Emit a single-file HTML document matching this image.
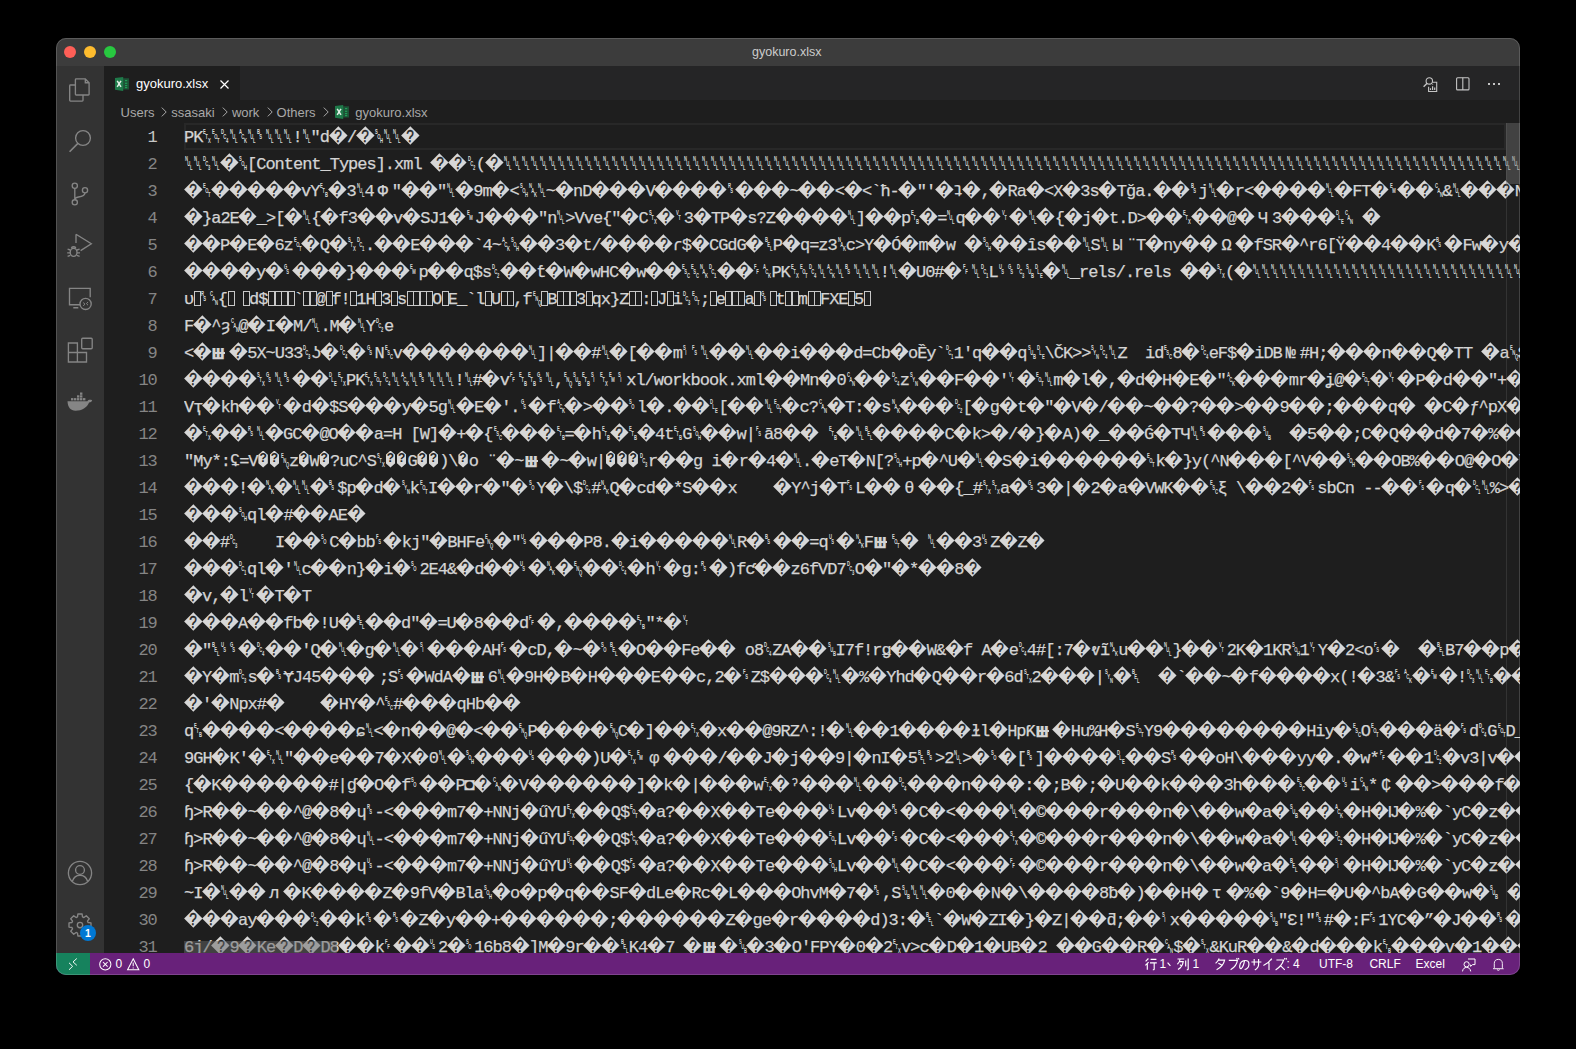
<!DOCTYPE html>
<html><head><meta charset="utf-8">
<style>
html,body{margin:0;padding:0;background:#000;width:1576px;height:1049px;overflow:hidden}
*{box-sizing:border-box}
.win{position:absolute;left:56px;top:38px;width:1464px;height:937px;border-radius:10px;overflow:hidden;background:#1e1e1e;font-family:"Liberation Sans",sans-serif}
.bord{position:absolute;left:56px;top:38px;width:1464px;height:937px;border-radius:10px;border:1px solid rgba(255,255,255,.16);pointer-events:none}
.title{position:absolute;left:0;top:0;width:1464px;height:28px;background:#3c3c3c;color:#cccccc;font-size:12.5px;line-height:28px;text-align:center}
.tl{position:absolute;top:7.8px;width:12px;height:12px;border-radius:50%}
.act{position:absolute;left:0;top:28px;width:48px;height:887px;background:#333333}
.act svg{position:absolute;left:0;width:48px;fill:none;stroke:#858585;stroke-width:1.35}
.tabs{position:absolute;left:48px;top:28px;width:1416px;height:34px;background:#252526}
.tab{position:absolute;left:0;top:0;width:136px;height:34px;background:#1e1e1e;color:#ffffff;font-size:13px;line-height:35.5px}
.crumbs{position:absolute;left:48px;top:62px;width:1416px;height:23px;background:#1e1e1e;color:#a9a9a9;font-size:13px;line-height:25px;white-space:nowrap}
.crumbs span{position:absolute;top:0}
.chev{position:absolute;top:7px;width:6px;height:10px}
.ed{position:absolute;left:48px;top:85px;width:1416px;height:830px;overflow:hidden;background:#1e1e1e}
.curl{position:absolute;left:80px;top:0;width:1322px;height:27px;border:2px solid #282828}
.n{position:absolute;left:0;width:52.8px;text-align:right;color:#858585;font:17px/27px "Liberation Mono",monospace;letter-spacing:-1.01px;padding-top:1px}
.n.a{color:#c6c6c6}
.code{position:absolute;left:80px;top:0;width:1336px;height:830px;overflow:hidden}
.l{position:absolute;left:0;height:27px;white-space:pre;font:17px/27px "Liberation Mono",monospace;letter-spacing:-1.01px;color:#d4d4d4;padding-top:1px;-webkit-text-stroke:.25px #d4d4d4}
.l b,.l s,.l u,.l i{-webkit-text-stroke:0}
.l b,.l s,.l u,.l i,.l em{display:inline-block;vertical-align:top;height:27px;position:relative;letter-spacing:0;text-decoration:none;font-style:normal;font-weight:normal}
.l b{width:18px}
.l b:before{content:"";position:absolute;left:2.65px;top:4.55px;width:12.7px;height:12.7px;background:#d7d7d7;transform:rotate(45deg)}
.l b:after{content:"?";position:absolute;left:0;top:4px;width:18px;text-align:center;color:#1e1e1e;font:16px/17px "Liberation Sans",sans-serif;transform:scaleX(.85);-webkit-text-stroke:.35px #1e1e1e}
.l s{width:11.25px}
.l s:before{content:"";position:absolute;left:.8px;top:2.5px;width:9.5px;height:17px;background:#d7d7d7;clip-path:polygon(50% 0,100% 25%,100% 75%,50% 100%,0 75%,0 25%)}
.l s:after{content:"?";position:absolute;left:0;top:2px;width:11px;text-align:center;color:#1e1e1e;font:bold 12px/17px "Liberation Sans",sans-serif}
.l u{width:6.5px}
.l u:before{content:"";position:absolute;left:.6px;top:5px;width:5px;height:13px;border:1px solid #c8c8c8}
.l em{width:18px;text-align:center}
.l em.k:before{content:"Ш";position:absolute;left:2px;top:1px;font-weight:bold;transform:scaleX(1.25)}
.l em.k:after{content:"";position:absolute;left:4px;top:12px;width:10px;height:1.5px;background:#d4d4d4}
.l em.h{width:4.5px}
.l i{width:9px;font:bold 6.5px/6px "Liberation Sans",sans-serif;color:#dadada}
.l i{padding:10.2px 0 0 4.9px;transform:scaleX(.64);transform-origin:0 0;margin-right:-5.0625px;width:14.0625px}
.l i:before{content:attr(x);position:absolute;left:1.6px;top:5.2px}
.l i:after{content:attr(z);position:absolute;left:9.5px;top:14.4px}
.sb{position:absolute;left:1402px;top:0;width:14px;height:830px;border-left:1px solid rgba(128,128,128,.22)}
.thumb{position:absolute;left:1402px;top:0;width:14px;height:61px;background:rgba(121,121,121,.4)}
.hl31{position:absolute;left:80px;top:818px;width:153px;height:12px;background:rgba(100,100,100,.5)}
.status{position:absolute;left:0;top:915px;width:1464px;height:22px;background:#68217a;color:#fff;font-size:12px;line-height:22px;white-space:nowrap}
.status span{position:absolute;top:0}
.remote{position:absolute;left:0;top:0;width:34px;height:22px;background:#16825d}
svg{overflow:visible}
</style></head><body>
<div class="win">
  <div class="title">
    <div class="tl" style="left:8px;background:#fe5f57"></div>
    <div class="tl" style="left:28px;background:#febc2e"></div>
    <div class="tl" style="left:48px;background:#28c840"></div>
    <span style="position:absolute;left:696px;top:0">gyokuro.xlsx</span>
  </div>
  <div class="act">
<svg style="left:12px;top:12px;width:26px" height="26" viewBox="0 0 26 26"><path d="M8.2 .9H17.3L21.1 4.7V16.2Q21.1 17 20.3 17H8.2Q7.4 17 7.4 16.2V1.7Q7.4 .9 8.2 .9ZM17.3 .9V4.7H21.1"/><path d="M7.4 7H2.5Q1.7 7 1.7 7.8V22.3Q1.7 23.1 2.5 23.1H14.2Q15 23.1 15 22.3V17"/></svg>
<svg style="left:12px;top:62px;width:26px" height="27" viewBox="0 0 26 27"><circle cx="15" cy="10" r="7.4"/><path d="M9.9 15.4L1.6 23.8" stroke-width="1.6"/></svg>
<svg style="left:12px;top:112px;width:26px" height="28" viewBox="0 0 26 28"><circle cx="6.8" cy="7.7" r="2.6"/><circle cx="17" cy="12.2" r="2.6"/><circle cx="6.8" cy="24.3" r="2.6"/><path d="M6.8 10.3V21.7M17 14.8C17 18 13.5 18.6 10.5 19C8.3 19.3 6.8 20 6.8 21.7"/></svg>
<svg style="left:10px;top:166px;width:28px" height="28" viewBox="0 0 28 28"><path d="M10 2.3L25.3 11.8L14.6 18.6M10 2.3V11"/><ellipse cx="7.6" cy="20.3" rx="3.4" ry="4.1"/><path d="M5.2 15.8Q7.6 13.6 10 15.8M1.6 17.2L4.3 18M1.2 20.8H4.2M1.6 24.4L4.3 23.4M13.6 17.2L10.9 18M14 20.8H11M13.6 24.4L10.9 23.4"/></svg>
<svg style="left:10px;top:218px;width:28px" height="28" viewBox="0 0 28 28"><path d="M14 20.7H3.5V4.3H24.2V13.2M7.3 23.7H12.3"/><circle cx="19.6" cy="19.9" r="5.6"/><path d="M17.2 21.8L19 20.2L17.2 18.6M22 18.1L20.4 19.6L22 21.2" stroke-width="1"/></svg>
<svg style="left:10px;top:270px;width:28px" height="28" viewBox="0 0 28 28"><path d="M2.4 7H11.4V16.5H20.5V26H2.4ZM2.4 16.5H11.4V26"/><rect x="15.7" y="2.2" width="10.5" height="10.5" rx="1"/></svg>
<svg style="left:10px;top:324px;width:28px" height="24" viewBox="0 0 28 24"><path style="fill:#858585;stroke:none" d="M1.5 11.2H21.4C22.3 9.6 24 9.4 26.2 10.2C25.7 11.8 24.6 12.4 23.1 12.5C21 17.6 16 20.7 9.6 20.7C4.5 20.7 1.7 17 1.5 11.2Z"/><g style="fill:#858585;stroke:none"><rect x="5" y="8.1" width="2.4" height="2.3"/><rect x="8" y="8.1" width="2.4" height="2.3"/><rect x="11" y="8.1" width="2.4" height="2.3"/><rect x="14" y="8.1" width="2.4" height="2.3"/><rect x="17" y="8.1" width="2.4" height="2.3"/><rect x="11" y="5.3" width="2.4" height="2.3"/><rect x="14" y="5.3" width="2.4" height="2.3"/><rect x="14" y="2.5" width="2.4" height="2.3"/></g></svg>
<svg style="left:10px;top:792.7px;width:28px" height="28" viewBox="0 0 28 28"><circle cx="14" cy="14" r="11.6"/><circle cx="14" cy="11" r="4.4"/><path d="M6.4 22.3C7.5 18.4 10.4 16.2 14 16.2C17.6 16.2 20.5 18.4 21.6 22.3"/></svg>
<svg style="left:10px;top:844.7px;width:28px" height="28" viewBox="0 0 28 28"><path d="M22.02 11.52 L25.00 11.88 L25.00 16.12 L22.02 16.48 L21.43 17.92 L23.27 20.28 L20.28 23.27 L17.92 21.43 L16.48 22.02 L16.12 25.00 L11.88 25.00 L11.52 22.02 L10.08 21.43 L7.72 23.27 L4.73 20.28 L6.57 17.92 L5.98 16.48 L3.00 16.12 L3.00 11.88 L5.98 11.52 L6.57 10.08 L4.73 7.72 L7.72 4.73 L10.08 6.57 L11.52 5.98 L11.88 3.00 L16.12 3.00 L16.48 5.98 L17.92 6.57 L20.28 4.73 L23.27 7.72 L21.43 10.08 Z" stroke-linejoin="round"/><circle cx="14" cy="14" r="2.7"/></svg>
<svg style="left:24px;top:858.7px;width:17px" height="17" viewBox="0 0 17 17"><circle cx="8" cy="8" r="8" style="fill:#0078d4;stroke:none"/><text x="8" y="12" text-anchor="middle" style="fill:#fff;stroke:none;font:bold 10.5px Liberation Sans">1</text></svg>
</div>
  <div class="tabs">
    <div class="tab"><svg style="position:absolute;left:10px;top:10px" width="16" height="16" viewBox="0 0 16 16"><path d="M9 2.2H15V13.6H9Z" fill="#1d5236"/><g fill="#1f9d57"><rect x="11" y="4" width="2.2" height="1.2"/><rect x="11" y="6.7" width="2.2" height="1.2"/><rect x="11" y="9" width="2.2" height="1.2"/><rect x="11" y="11" width="2.2" height="1.2"/></g><path d="M1 2.1L9.2 1V14.9L1 13.8Z" fill="#1f7a4a"/><path d="M3.2 4.9L7 10.8M7 4.9L3.2 10.8" stroke="#e3f0e8" stroke-width="1.5"/></svg><span style="position:absolute;left:32px;top:0">gyokuro.xlsx</span>
      <svg style="position:absolute;left:116px;top:13.7px" width="9" height="9"><path d="M.5 .5L8.5 8.5M8.5 .5L.5 8.5" stroke="#fff" stroke-width="1.2"/></svg>
    </div>
    <svg style="position:absolute;left:1319px;top:11px" width="16" height="16" viewBox="0 0 16 16" fill="none" stroke="#c5c5c5" stroke-width="1.1"><circle cx="6.3" cy="3.9" r="3.2"/><path d="M4.1 6.2L.6 9.7" stroke-width="1.3"/><path d="M9.8 5.3H13.7V14.5H5.6V9.8"/><path d="M7.5 13V11.3M9.6 13V9.2M11.7 13V10.5M9.6 7.4V7" stroke-width="1.2"/></svg>
<svg style="position:absolute;left:1352px;top:11px" width="15" height="15" viewBox="0 0 15 15" fill="none" stroke="#c5c5c5" stroke-width="1.1"><rect x=".6" y=".7" width="12.4" height="12.2" rx="1"/><path d="M6.8 .7V12.9"/></svg>
<svg style="position:absolute;left:1383px;top:16px" width="14" height="4" viewBox="0 0 14 4" fill="#c5c5c5"><rect x="1" y="1" width="2" height="2"/><rect x="6" y="1" width="2" height="2"/><rect x="11" y="1" width="2" height="2"/></svg>
  </div>
  <div class="crumbs"><span style="left:16.6px">Users</span><svg class="chev" style="left:57px" width="6" height="10" viewBox="0 0 6 10"><path d="M.8 .6L5.2 5L.8 9.4" fill="none" stroke="#a9a9a9" stroke-width="1"/></svg><span style="left:67.3px">ssasaki</span><svg class="chev" style="left:117.5px" width="6" height="10" viewBox="0 0 6 10"><path d="M.8 .6L5.2 5L.8 9.4" fill="none" stroke="#a9a9a9" stroke-width="1"/></svg><span style="left:127.9px">work</span><svg class="chev" style="left:163px" width="6" height="10" viewBox="0 0 6 10"><path d="M.8 .6L5.2 5L.8 9.4" fill="none" stroke="#a9a9a9" stroke-width="1"/></svg><span style="left:172.6px">Others</span><svg class="chev" style="left:218.5px" width="6" height="10" viewBox="0 0 6 10"><path d="M.8 .6L5.2 5L.8 9.4" fill="none" stroke="#a9a9a9" stroke-width="1"/></svg><svg style="position:absolute;left:229.5px;top:4px" width="16" height="16" viewBox="0 0 16 16"><path d="M9 2.2H15V13.6H9Z" fill="#1d5236"/><g fill="#1f9d57"><rect x="11" y="4" width="2.2" height="1.2"/><rect x="11" y="6.7" width="2.2" height="1.2"/><rect x="11" y="9" width="2.2" height="1.2"/><rect x="11" y="11" width="2.2" height="1.2"/></g><path d="M1 2.1L9.2 1V14.9L1 13.8Z" fill="#1f7a4a"/><path d="M3.2 4.9L7 10.8M7 4.9L3.2 10.8" stroke="#e3f0e8" stroke-width="1.5"/></svg><span style="left:251.3px">gyokuro.xlsx</span></div>
  <div class="ed">
    <div class="curl"></div>
    <div class="n a" style="top:0px">1</div><div class="n" style="top:27px">2</div><div class="n" style="top:54px">3</div><div class="n" style="top:81px">4</div><div class="n" style="top:108px">5</div><div class="n" style="top:135px">6</div><div class="n" style="top:162px">7</div><div class="n" style="top:189px">8</div><div class="n" style="top:216px">9</div><div class="n" style="top:243px">10</div><div class="n" style="top:270px">11</div><div class="n" style="top:297px">12</div><div class="n" style="top:324px">13</div><div class="n" style="top:351px">14</div><div class="n" style="top:378px">15</div><div class="n" style="top:405px">16</div><div class="n" style="top:432px">17</div><div class="n" style="top:459px">18</div><div class="n" style="top:486px">19</div><div class="n" style="top:513px">20</div><div class="n" style="top:540px">21</div><div class="n" style="top:567px">22</div><div class="n" style="top:594px">23</div><div class="n" style="top:621px">24</div><div class="n" style="top:648px">25</div><div class="n" style="top:675px">26</div><div class="n" style="top:702px">27</div><div class="n" style="top:729px">28</div><div class="n" style="top:756px">29</div><div class="n" style="top:783px">30</div><div class="n" style="top:810px">31</div>
    <div class="code">
<div class=l style="top:0px">PK<i x=E z=X>T</i><i x=E z=T>O</i><i x=D z=4>C</i><i x=N z=L>U</i><i x=A z=K>C</i><i x=N z=L>U</i><i x=B>S</i><i x=N z=L>U</i><i x=N z=L>U</i><i x=N z=L>U</i>!<i x=N z=L>U</i>"d<b></b>/<b></b><i x=S z=H>O</i><i x=N z=L>U</i><i x=N z=L>U</i><b></b></div>
<div class=l style="top:27px"><i x=N z=L>U</i><i x=N z=L>U</i><i x=D z=3>C</i><i x=N z=L>U</i><b></b><i x=S z=H>O</i>[Content_Types].xml <b></b><b></b><i x=D z=2>C</i>(<b></b><i x=N z=L>U</i><i x=N z=L>U</i><i x=N z=L>U</i><i x=N z=L>U</i><i x=N z=L>U</i><i x=N z=L>U</i><i x=N z=L>U</i><i x=N z=L>U</i><i x=N z=L>U</i><i x=N z=L>U</i><i x=N z=L>U</i><i x=N z=L>U</i><i x=N z=L>U</i><i x=N z=L>U</i><i x=N z=L>U</i><i x=N z=L>U</i><i x=N z=L>U</i><i x=N z=L>U</i><i x=N z=L>U</i><i x=N z=L>U</i><i x=N z=L>U</i><i x=N z=L>U</i><i x=N z=L>U</i><i x=N z=L>U</i><i x=N z=L>U</i><i x=N z=L>U</i><i x=N z=L>U</i><i x=N z=L>U</i><i x=N z=L>U</i><i x=N z=L>U</i><i x=N z=L>U</i><i x=N z=L>U</i><i x=N z=L>U</i><i x=N z=L>U</i><i x=N z=L>U</i><i x=N z=L>U</i><i x=N z=L>U</i><i x=N z=L>U</i><i x=N z=L>U</i><i x=N z=L>U</i><i x=N z=L>U</i><i x=N z=L>U</i><i x=N z=L>U</i><i x=N z=L>U</i><i x=N z=L>U</i><i x=N z=L>U</i><i x=N z=L>U</i><i x=N z=L>U</i><i x=N z=L>U</i><i x=N z=L>U</i><i x=N z=L>U</i><i x=N z=L>U</i><i x=N z=L>U</i><i x=N z=L>U</i><i x=N z=L>U</i><i x=N z=L>U</i><i x=N z=L>U</i><i x=N z=L>U</i><i x=N z=L>U</i><i x=N z=L>U</i><i x=N z=L>U</i><i x=N z=L>U</i><i x=N z=L>U</i><i x=N z=L>U</i><i x=N z=L>U</i><i x=N z=L>U</i><i x=N z=L>U</i><i x=N z=L>U</i><i x=N z=L>U</i><i x=N z=L>U</i><i x=N z=L>U</i><i x=N z=L>U</i><i x=N z=L>U</i><i x=N z=L>U</i><i x=N z=L>U</i><i x=N z=L>U</i><i x=N z=L>U</i><i x=N z=L>U</i><i x=N z=L>U</i><i x=N z=L>U</i><i x=N z=L>U</i><i x=N z=L>U</i><i x=N z=L>U</i><i x=N z=L>U</i><i x=N z=L>U</i><i x=N z=L>U</i><i x=N z=L>U</i><i x=N z=L>U</i><i x=N z=L>U</i><i x=N z=L>U</i><i x=N z=L>U</i><i x=N z=L>U</i><i x=N z=L>U</i><i x=N z=L>U</i><i x=N z=L>U</i><i x=N z=L>U</i><i x=N z=L>U</i><i x=N z=L>U</i><i x=N z=L>U</i><i x=N z=L>U</i><i x=N z=L>U</i><i x=N z=L>U</i><i x=N z=L>U</i><i x=N z=L>U</i><i x=N z=L>U</i><i x=N z=L>U</i><i x=N z=L>U</i><i x=N z=L>U</i><i x=N z=L>U</i><i x=N z=L>U</i><i x=N z=L>U</i><i x=N z=L>U</i><i x=N z=L>U</i><i x=N z=L>U</i><i x=N z=L>U</i><i x=N z=L>U</i><i x=N z=L>U</i><i x=N z=L>U</i><i x=N z=L>U</i><i x=N z=L>U</i><i x=N z=L>U</i><i x=N z=L>U</i><i x=N z=L>U</i><i x=N z=L>U</i><i x=N z=L>U</i></div>
<div class=l style="top:54px"><b></b><i x=E z=T>O</i><b></b><b></b><b></b><b></b><b></b>vY<i x=E z=B>T</i><b></b>3<i x=N z=L>U</i>4<em>Φ</em>"<b></b><b></b>"<i x=N z=L>U</i><b></b>9m<b></b>&lt;<i x=S z=H>O</i><i x=N z=K>A</i><i x=N z=L>U</i>~<b></b>nD<b></b><b></b><b></b>V<b></b><b></b><b></b><b></b><i x=R>S</i><b></b><b></b><b></b>~<b></b><b></b>&lt;<b></b>&lt;`ħ-<b></b>"'<b></b>ʇ<b></b>,<b></b>Ra<b></b>&lt;X<b></b>3s<b></b>Tğa.<b></b><b></b><i x=B>S</i>j<i x=N z=L>U</i><b></b>r&lt;<b></b><b></b><b></b><b></b><i x=N z=L>U</i><b></b>FT<b></b><i x=E>M</i><b></b><b></b><i x=C z=N>A</i>&amp;<i x=N z=L>U</i><b></b><b></b><b></b>N<i x=F>F</i><b></b><b></b><b></b><b></b></div>
<div class=l style="top:81px"><b></b>}a2E<b></b>_&gt;[<b></b><i x=N z=L>U</i>{<b></b>f3<b></b><b></b>v<b></b>SJ1<b></b><i x=E>M</i>J<b></b><b></b><b></b>"n<i x=N z=L>U</i>&gt;Vve{"<b></b>C<i x=S z=X>T</i><b></b><i x=V>T</i>3<b></b>TP<b></b>s?Z<b></b><b></b><b></b><b></b><i x=N z=L>U</i>]<b></b><b></b>p<i x=E z=B>T</i><b></b>=<i x=N z=L>U</i>q<b></b><b></b><i x=V>T</i><b></b><i x=N z=L>U</i><b></b>{<b></b>j<b></b>t.D&gt;<b></b><b></b><i x=E z=X>T</i><b></b><b></b>@<b></b><em>Ч</em>3<b></b><b></b><b></b><i x=D z=E>L</i><i x=C z=N>A</i> <b></b></div>
<div class=l style="top:108px"><b></b><b></b>P<b></b>E<b></b>6z<i x=E z=T>O</i><b></b>Q<b></b><i x=S z=X>T</i><i x=D z=1>C</i>.<b></b><b></b>E<b></b><b></b><b></b>`4~<i x=A z=K>C</i><i x=S z=H>O</i><b></b><b></b>3<b></b>t/<b></b><b></b><b></b><b></b>ɾ$<b></b>CGdG<b></b><i x=B z=L>E</i>P<b></b>q=z3<i x=N z=K>A</i>c&gt;Y<b></b>Ó<b></b>m<b></b>w <b></b><i x=S z=H>O</i><b></b><b></b>ȋs<b></b><b></b><i x=N z=L>U</i>S<i x=N z=L>U</i><em>Ы</em>¨T<b></b>ny<b></b><b></b><em>Ω</em><b></b>fSR<b></b>^r6[Ÿ<b></b><b></b>4<b></b><b></b>K<i x=B>S</i><b></b>Fw<b></b>y<b></b><b></b><b></b></div>
<div class=l style="top:135px"><b></b><b></b><b></b><b></b>y<b></b><i x=G>S</i><b></b><b></b><b></b>}<b></b><b></b><b></b><i x=E>M</i>p<b></b><b></b>ɋ$s<i x=D z=2>C</i><b></b><b></b>ƭ<b></b>W<b></b>wHC<b></b>w<b></b><b></b><i x=E z=C>S</i><i x=E z=C>S</i><i x=N z=K>A</i><i x=D z=1>C</i><b></b><b></b><i x=F>F</i><i x=A z=K>C</i>PK<i x=E z=X>T</i><i x=E z=T>O</i><i x=D z=4>C</i><i x=N z=L>U</i><i x=A z=K>C</i><i x=N z=L>U</i><i x=B>S</i><i x=N z=L>U</i><i x=N z=L>U</i><i x=N z=L>U</i>!<i x=N z=L>U</i><b></b>U0#<b></b><i x=F>F</i><i x=N z=L>U</i><i x=D z=1>C</i>L<i x=U>S</i><i x=G>S</i><i x=D z=3>C</i><i x=S z=B>U</i><i x=D z=E>L</i><b></b><i x=N z=L>U</i>_rels/.rels <b></b><b></b><i x=S z=X>T</i>(<b></b><i x=N z=L>U</i><i x=N z=L>U</i><i x=N z=L>U</i><i x=N z=L>U</i><i x=N z=L>U</i><i x=N z=L>U</i><i x=N z=L>U</i><i x=N z=L>U</i><i x=N z=L>U</i><i x=N z=L>U</i><i x=N z=L>U</i><i x=N z=L>U</i><i x=N z=L>U</i><i x=N z=L>U</i><i x=N z=L>U</i><i x=N z=L>U</i><i x=N z=L>U</i><i x=N z=L>U</i><i x=N z=L>U</i><i x=N z=L>U</i><i x=N z=L>U</i><i x=N z=L>U</i><i x=N z=L>U</i><i x=N z=L>U</i><i x=N z=L>U</i><i x=N z=L>U</i><i x=N z=L>U</i><i x=N z=L>U</i><i x=N z=L>U</i><i x=N z=L>U</i><i x=N z=L>U</i><i x=N z=L>U</i><i x=N z=L>U</i><i x=N z=L>U</i><i x=N z=L>U</i><i x=N z=L>U</i><i x=N z=L>U</i><i x=N z=L>U</i><i x=N z=L>U</i><i x=N z=L>U</i></div>
<div class=l style="top:162px">ʋ<u></u><i x=R>S</i><i x=C z=N>A</i>{<u></u> <u></u>d$<u></u><u></u><u></u><u></u>`<u></u><u></u>@<u></u>f!<u></u>1H<u></u>3<u></u>s<u></u><u></u><u></u><u></u>O<u></u>E_`l<u></u>U<u></u><u></u>,f<i x=E z=Q>N</i><u></u>B<u></u><u></u><u></u>3<u></u>qx}Z<u></u><u></u>:<u></u>J<u></u>i<i x=D z=3>C</i><i x=E z=T>O</i>;<u></u>e<u></u><u></u><u></u>a<u></u><i x=G>S</i><u></u>t<u></u><u></u>m<u></u><u></u>FXE<u></u>5<u></u></div>
<div class=l style="top:189px">F<b></b>^ȝ<i x=C z=N>A</i>@<b></b>I<b></b>M/<i x=N z=L>U</i>.M<b></b><i x=N z=L>U</i>Y<i x=D z=2>C</i>e</div>
<div class=l style="top:216px">&lt;<b></b><em class=k></em><b></b>5X~U33<i x=D z=3>C</i>ʖ<b></b><i x=D z=4>C</i><b></b><i x=G>S</i>N<i x=E z=C>S</i>v<b></b><b></b><b></b><b></b><b></b><b></b><b></b><i x=N z=L>U</i>]|<b></b><b></b>#<i x=N z=L>U</i><b></b>[<b></b><b></b>m<i x=S>I</i><i x=F>S</i><i x=N z=L>U</i><b></b><b></b><i x=N z=L>U</i><b></b><b></b>i<b></b><b></b><b></b>d=Cb<b></b>oȄy`<i x=D z=1>C</i>1'q<b></b><b></b>q<i x=S z=B>U</i><i x=D z=E>L</i>\ČK&gt;&gt;<i x=S z=N>Y</i><i x=D z=4>C</i><i x=N z=L>U</i>Z  id<i x=E z=C>S</i>8<b></b><i x=D z=4>C</i>eF$<b></b>iDB<em>№</em>#H;<b></b><b></b><b></b>n<b></b><b></b>Q<b></b>TT <b></b>a<i x=E z=Q>N</i>S<b></b></div>
<div class=l style="top:243px"><b></b><b></b><b></b><b></b><i x=S z=X>T</i><i x=G>S</i><i x=N z=L>U</i><i x=B>S</i><b></b><b></b><i x=D z=E>L</i><i x=E z=X>T</i>PK<i x=E z=X>T</i><i x=E z=T>O</i><i x=D z=4>C</i><i x=N z=L>U</i><i x=A z=K>C</i><i x=N z=L>U</i><i x=B>S</i><i x=N z=L>U</i><i x=N z=L>U</i><i x=N z=L>U</i>!<i x=N z=L>U</i>#<b></b>v<i x=F>F</i><i x=E z=B>T</i><i x=E z=B>T</i><i x=G>S</i><i x=N z=L>U</i>,<i x=E z=Q>N</i><i x=S z=B>U</i><i x=E z=B>T</i><i x=S>I</i><i x=E z=X>T</i><i x=E>M</i><i x=S>I</i>xl/workbook.xml<b></b><b></b>Mn<b></b>0<i x=C z=N>A</i><b></b><b></b><i x=D z=4>C</i>z<i x=S z=N>Y</i><b></b><b></b>F<b></b><b></b>'<i x=V>T</i><b></b><i x=E z=T>O</i><i x=N z=L>U</i>m<b></b>l<b></b>,<b></b>d<b></b>H<b></b>E<b></b>"<i x=A z=K>C</i><b></b><b></b><b></b>mr<b></b>ʝ@<b></b><i x=E z=T>O</i><b></b><i x=V>T</i><b></b>P<b></b>d<b></b><b></b>"+<b></b><b></b></div>
<div class=l style="top:270px">Vҭ<b></b>kh<b></b><b></b><i x=V>T</i><b></b>d<b></b>$S<b></b><b></b><b></b>y<b></b>5g<i x=N z=L>U</i><b></b>E<b></b>'.<i x=G>S</i><b></b>f<i x=A z=K>C</i><b></b>&gt;<b></b><b></b><i x=S>O</i>l<b></b>.<b></b><b></b><i x=D z=E>L</i>[<b></b><b></b><i x=N z=L>U</i><i x=E z=T>O</i><b></b>c?<i x=C z=N>A</i><b></b>T:<b></b>s<i x=N z=K>A</i><b></b><b></b><b></b><i x=D z=2>C</i>[<b></b>g<b></b>t<b></b>"<b></b>V<b></b>/<b></b><b></b>~<b></b><b></b>?<b></b><b></b>&gt;<b></b><b></b>9<b></b><b></b>;<b></b><b></b><b></b>q<b></b> <b></b>C<b></b>ƒ^pX<b></b><b></b></div>
<div class=l style="top:297px"><b></b><i x=E z=X>T</i><b></b><b></b><i x=R>S</i><i x=N z=L>U</i><b></b>GC<b></b>@O<b></b><b></b>a=H [W]<b></b>+<b></b>{<i x=E z=C>S</i><b></b><b></b><b></b><i x=E z=B>T</i>=<b></b>h<i x=E z=B>T</i><b></b><i x=E z=B>T</i><b></b>4t<i x=E z=B>T</i>G<i x=S z=H>O</i><b></b><b></b>w|<i x=F>S</i>ā8<b></b><b></b> <i x=E z=B>T</i><b></b><i x=N z=L>U</i><i x=B z=L>E</i><b></b><b></b><b></b><b></b>C<b></b>k&gt;<b></b>/<b></b>}<b></b>A)<b></b>_<b></b><b></b>Ǵ<b></b>TЧ<i x=N z=L>U</i><i x=B>S</i><b></b><b></b><b></b><i x=S z=B>U</i>  <b></b>5<b></b><b></b>;C<b></b>Q<b></b><b></b>d<b></b>7<b></b>%<b></b><b></b></div>
<div class=l style="top:324px">"My*:ʢ=V<s></s><s></s><i x=E z=Q>N</i>z<s></s>W<s></s>?uC^S<i x=S z=X>T</i><s></s><s></s>G<s></s><s></s>)\<s></s>o ¨<b></b>~<em class=k></em><b></b>~<b></b>w|<s></s><s></s><s></s><i x=D z=3>C</i>r<b></b><b></b>g i<b></b>r<b></b>4<b></b><i x=N z=L>U</i>.<b></b>eT<b></b>N[?<i x=S z=H>O</i>+p<b></b>^U<b></b><i x=N z=L>U</i><b></b>S<b></b>i<b></b><b></b><b></b><b></b><b></b><b></b><i x=E z=T>O</i>k<b></b>}y(^N<b></b><b></b><b></b>[^V<b></b><b></b><i x=S z=H>O</i><b></b><b></b>OB%<b></b><b></b>O@<b></b>O<b></b>\<b></b></div>
<div class=l style="top:351px"><b></b><b></b><b></b>!<b></b><i x=N z=K>A</i><b></b><i x=N z=L>U</i><i x=N z=L>U</i><b></b><i x=B>S</i>$p<b></b>d<b></b><i x=S z=N>Y</i>k<i x=E z=T>O</i>I<b></b><b></b>r<b></b>"<b></b><i x=S>O</i>Y<b></b>\$<i x=D z=4>C</i>#<i x=N z=K>A</i>Q<b></b>cd<b></b>*S<b></b><b></b>x    <b></b>Y^j<b></b>T<i x=F>S</i>L<b></b><b></b><em>θ</em><b></b><b></b>{_#<i x=S z=X>T</i><i x=S z=X>T</i>a<b></b><i x=G>S</i>3<b></b>|<b></b>2<b></b>a<b></b>VWK<b></b><b></b><i x=E z=C>S</i>ξ \<b></b><b></b>2<b></b><i x=F>S</i>sbCn --<b></b><b></b><i x=F>S</i><b></b>q<b></b><i x=D z=1>C</i><i x=N z=L>U</i>%&gt;<b></b><i x=E z=T>O</i></div>
<div class=l style="top:378px"><b></b><b></b><b></b><i x=S z=H>O</i>ql<b></b>#<b></b><b></b>AE<b></b></div>
<div class=l style="top:405px"><b></b><b></b>#<i x=D z=3>C</i>    I<b></b><b></b><i x=S>O</i>C<b></b>bb<i x=F>S</i><b></b>kj"<b></b>BHFe<i x=E z=Q>N</i><b></b>"<i x=U>S</i><b></b><b></b><b></b>P8.<b></b>i<b></b><b></b><b></b><b></b><b></b><i x=N z=L>U</i>R<b></b><i x=B>S</i><b></b><b></b>=q<i x=U>S</i><b></b><i x=N z=K>A</i>F<em class=k></em><i x=E z=T>O</i><b></b> <i x=N z=L>U</i><b></b><b></b>3<i x=U>S</i>Z<b></b>Z<b></b></div>
<div class=l style="top:432px"><b></b><b></b><b></b><i x=D z=1>C</i>ql<b></b>'<i x=N z=L>U</i>c<b></b><b></b>n}<b></b>i<b></b><i x=S>O</i>2E4&amp;<b></b>d<b></b><b></b><i x=U>S</i><b></b><i x=N z=K>A</i><b></b><i x=E z=Q>N</i><b></b><b></b><i x=D z=4>C</i><b></b>h<i x=V>T</i><b></b>g:<i x=R>S</i><b></b>)fƈ<b></b><b></b>z6fVD7<i x=D z=3>C</i>O<b></b>"<b></b>*<b></b><b></b>8<b></b></div>
<div class=l style="top:459px"><b></b>v,<b></b>l<i x=V>T</i><b></b>T<b></b>T</div>
<div class=l style="top:486px"><b></b><b></b><b></b>A<b></b><b></b>fb<b></b>!U<b></b><i x=B z=L>E</i><b></b><b></b>d"<b></b>=U<b></b>8<b></b><b></b>d<i x=F>F</i><b></b>,<b></b><b></b><b></b><b></b><i x=E z=B>T</i>"*<b></b><i x=V>T</i></div>
<div class=l style="top:513px"><b></b>"<i x=B z=L>E</i><i x=U>S</i><i x=G>S</i><b></b><i x=D z=4>C</i><b></b><b></b>'Q<b></b><i x=N z=L>U</i><b></b>g<b></b><i x=N z=L>U</i><b></b><i x=S>I</i><b></b><b></b><b></b>AH<i x=F>S</i><b></b>cD,<b></b>~<b></b><i x=S>O</i><i x=B z=L>E</i><b></b>O<b></b><b></b>Fe<b></b><b></b> o8<i x=D z=4>C</i>ZA<b></b><b></b><i x=S z=B>U</i>I7f!rǥ<b></b><b></b>W&amp;<b></b>f A<b></b>e<i x=D z=4>C</i>4#[:7<b></b>ⱴĩ<i x=N z=K>A</i>u<b></b><b></b><i x=N z=L>U</i>}<b></b><b></b><i x=V>T</i>2K<b></b>1KR<i x=S z=H>O</i>1<i x=V>T</i>Y<b></b>2&lt;o<i x=F>S</i><b></b>  <b></b><i x=B z=L>E</i>B7<b></b><b></b>p<b></b>8</div>
<div class=l style="top:540px"><b></b>Y<b></b>m<i x=D z=3>C</i>s<b></b><i x=B>S</i>ɎJ45<b></b><b></b><b></b><em class=h></em>;S<i x=F>S</i><b></b>WdA<b></b><em class=k></em>6<i x=N z=L>U</i><b></b>9H<b></b>B<b></b>H<b></b><b></b><b></b>E<b></b><b></b>c,2<b></b><i x=F>S</i>Z$<b></b><b></b><b></b><i x=D z=4>C</i><i x=N z=L>U</i><b></b>%<b></b>Yhd<b></b>Q<b></b><b></b>r<b></b>6d<i x=S z=X>T</i>2<b></b><b></b><b></b>|<i x=S z=N>Y</i><b></b><i x=B z=L>E</i>  <b></b>`<b></b><b></b>~<b></b>f<b></b><b></b><b></b><b></b>x(!<b></b>3&amp;<i x=F>S</i><i x=A z=K>C</i><b></b><i x=E>M</i><b></b>!<i x=D z=3>C</i><i x=N z=L>U</i><i x=E z=B>T</i><b></b><b></b></div>
<div class=l style="top:567px"><b></b>'<b></b>Npx#<b></b>    <b></b>HY<b></b>^<i x=E z=C>S</i>#<b></b><b></b><b></b>qHb<b></b><b></b></div>
<div class=l style="top:594px">q<i x=E z=B>T</i><b></b><b></b><b></b><b></b>&lt;<b></b><b></b><b></b><b></b>ɕ<i x=N z=L>U</i>&lt;<b></b>n<b></b><b></b>@<b></b>&lt;<b></b><b></b><i x=E z=Q>N</i>P<b></b><b></b><b></b><b></b><i x=E z=Q>N</i>C<b></b>]<b></b><b></b><i x=E z=X>T</i><b></b>x<b></b><b></b>@9RZ^:!<b></b><i x=N z=L>U</i><b></b><b></b>1<b></b><b></b><b></b><b></b>ɫl<b></b>HpƘ<em class=k></em><b></b>Hu%H<b></b>S<i x=E z=T>O</i>Y9<b></b><b></b><b></b><b></b><b></b><b></b><b></b><b></b>Hiy<b></b><i x=E z=C>S</i>O<i x=E z=T>O</i><b></b><b></b><b></b>ä<b></b><i x=F>S</i>d<i x=D z=4>C</i>G<i x=E z=T>O</i>D_m</div>
<div class=l style="top:621px">9GH<b></b>K'<b></b><i x=E z=X>T</i><i x=N z=L>U</i>"<b></b><b></b>e<b></b><b></b>7<b></b>X<b></b>0<i x=N z=L>U</i><b></b><i x=S z=H>O</i><b></b><b></b><b></b><i x=U>S</i><b></b><b></b><b></b>)U<b></b><i x=E z=X>T</i><i x=E>M</i><em>φ</em><b></b><b></b><b></b>/<b></b><b></b>J<b></b>j<b></b><b></b>9|<b></b>nI<b></b>5<i x=B z=L>E</i><i x=B>S</i>&gt;2<i x=N z=L>U</i>&gt;<b></b><i x=S>O</i><b></b>[<i x=B>S</i>]<b></b><b></b><b></b><b></b><i x=D z=E>L</i><b></b><b></b>S<i x=R>S</i><b></b><b></b>oH\<b></b><b></b><b></b>уy<b></b>.<b></b>w*<i x=F>F</i><b></b><b></b>1<i x=D z=2>C</i><b></b>v3|v<b></b><b></b></div>
<div class=l style="top:648px">{<b></b>K<b></b><b></b><b></b><b></b><b></b><b></b>#|ɠ<b></b>O<b></b>f<i x=S>O</i><b></b><b></b>P◘<b></b><i x=C z=N>A</i><b></b>V<b></b><b></b><b></b><b></b><b></b><b></b>]<b></b>k<b></b>|<b></b><b></b><b></b>w<i x=E z=X>T</i><b></b>ˀ<b></b><b></b><b></b><i x=N z=L>U</i><b></b><b></b><i x=D z=4>C</i><b></b><b></b><b></b>n<b></b><b></b><b></b>:<b></b>;B<b></b>;<b></b>U<b></b><b></b>k<b></b><b></b><b></b>3h<b></b><b></b><b></b><i x=E z=C>S</i><b></b><b></b><i x=U>S</i>i<i x=C z=N>A</i>*<em>₵</em><b></b><b></b>&gt;<b></b><b></b><b></b>f<b></b><b></b></div>
<div class=l style="top:675px">ɧ&gt;R<b></b><b></b>~<b></b><b></b>^@<b></b>8<b></b>ɥ<i x=R>S</i>-&lt;<b></b><b></b><b></b>m7<b></b>+NNj<b></b>űYU<i x=E z=X>T</i><b></b><b></b>Q$<i x=E z=T>O</i><b></b>a?<b></b><b></b>X<b></b><b></b>Te<b></b><b></b><b></b><i x=U>S</i>Lv<b></b><b></b><i x=R>S</i><b></b>C<b></b>&lt;<b></b><b></b><b></b><i x=N z=L>U</i><b></b>©<b></b><b></b><b></b>r<b></b><b></b><b></b>n<b></b>\<b></b><b></b>w<b></b>a<b></b><i x=S z=B>U</i><b></b><b></b><i x=A z=K>C</i><b></b>H<b></b>Ĳ<b></b>%<b></b>`yC<b></b>z<b></b><b></b></div>
<div class=l style="top:702px">ɧ&gt;R<b></b><b></b>~<b></b><b></b>^@<b></b>8<b></b>ɥ<i x=N z=L>U</i>-&lt;<b></b><b></b><b></b>m7<b></b>+NNj<b></b>űYU<i x=E z=T>O</i><b></b><b></b>Q$<i x=A z=K>C</i><b></b>a?<b></b><b></b>X<b></b><b></b>Te<b></b><b></b><b></b><i x=E z=T>O</i>Lv<b></b><b></b><i x=F>S</i><b></b>C<b></b>&lt;<b></b><b></b><b></b><i x=S z=X>T</i><b></b>©<b></b><b></b><b></b>r<b></b><b></b><b></b>n<b></b>\<b></b><b></b>w<b></b>a<b></b><i x=N z=L>U</i><b></b><b></b><i x=D z=2>C</i><b></b>H<b></b>Ĳ<b></b>%<b></b>`yC<b></b>z<b></b><b></b></div>
<div class=l style="top:729px">ɧ&gt;R<b></b><b></b>~<b></b><b></b>^@<b></b>8<b></b>ɥ<i x=U>S</i>-&lt;<b></b><b></b><b></b>m7<b></b>+NNj<b></b>űYU<i x=U>S</i><b></b><b></b>Q$<i x=F>S</i><b></b>a?<b></b><b></b>X<b></b><b></b>Te<b></b><b></b><b></b><i x=S z=H>O</i>Lv<b></b><b></b><i x=N z=L>U</i><b></b>C<b></b>&lt;<b></b><b></b><b></b><i x=F>F</i><b></b>©<b></b><b></b><b></b>r<b></b><b></b><b></b>n<b></b>\<b></b><b></b>w<b></b>a<b></b><i x=B z=L>E</i><b></b><b></b><i x=S>I</i><b></b>H<b></b>Ĳ<b></b>%<b></b>`yC<b></b>z<b></b><b></b></div>
<div class=l style="top:756px">~I<b></b><i x=N z=L>U</i><b></b><b></b><em>л</em><b></b>K<b></b><b></b><b></b><b></b>Z<b></b>9fV<b></b>Bla<i x=S z=H>O</i><b></b>o<b></b>p<b></b>q<b></b><b></b>SF<b></b>dLe<b></b>Rc<b></b>L<b></b><b></b><b></b>OhvM<b></b>7<b></b><i x=R>S</i>,S<i x=S z=B>U</i><i x=N z=L>U</i><i x=N z=L>U</i><b></b>0<b></b><b></b>N<b></b>\<b></b><b></b><b></b><b></b>8ƀ<b></b>)<b></b><b></b>H<b></b><em>τ</em><b></b>%<b></b>`9<b></b>H=<b></b>U<b></b>^bA<b></b>G<b></b><b></b>w<b></b><i x=S z=B>U</i> <b></b><b></b></div>
<div class=l style="top:783px"><b></b><b></b><b></b>ay<b></b><b></b><b></b><i x=D z=2>C</i><b></b><b></b>k<i x=R>S</i><b></b><i x=R>S</i><b></b>Z<b></b>y<b></b><b></b>+<b></b><b></b><b></b><b></b><b></b><b></b>;<b></b><b></b><b></b><b></b><b></b><b></b>Z<b></b>ge<b></b>r<b></b><b></b><b></b><b></b>d)3:<b></b><i x=B z=L>E</i>`<b></b>W<b></b>ZI<b></b>}<b></b>Z|<b></b><b></b>ƌ;<b></b><b></b><i x=S>I</i>x<b></b><b></b><b></b><b></b><b></b><i x=S z=B>U</i>"Ɛ!"<i x=R>S</i>#<b></b>:F<i x=F>S</i>1YC<b></b>”<b></b>J<b></b><b></b><i x=R>S</i><b></b></div>
<div class=l style="top:810px">6j/<b></b>9<b></b>Ke<b></b>D<b></b>D8<b></b><b></b>k<i x=F>F</i><b></b><b></b><i x=U>S</i>2<b></b><i x=S>O</i>16b8<b></b>]M<b></b>9r<b></b><b></b><i x=B z=L>E</i>K4<b></b>7_<b></b><em class=k></em><b></b><i x=S z=B>U</i><b></b>3<b></b>O'FPY<b></b>0<b></b>2<i x=E z=X>T</i>v&gt;c<b></b>D<b></b>1<b></b>UB<b></b>2_<b></b><b></b>G<b></b><b></b>R<b></b><i x=C z=N>A</i>$<b></b><i x=S z=X>T</i>&amp;KuR<b></b><b></b>&amp;<b></b>d<b></b><b></b><b></b>k<i x=E z=B>T</i><b></b><b></b><b></b>v<b></b>1<b></b><b></b><b></b></div>
    </div>
    <div class="hl31"></div>
    <div class="sb"></div>
    <div class="thumb"></div>
  </div>
  <div class="status"><div class="remote"><svg style="position:absolute;left:12px;top:4.5px" width="10" height="12" viewBox="0 0 10 12" fill="none" stroke="#fff" stroke-width="1.1"><path d="M1 4.8L4.6 8.3L1 11.8M8.8 .5L5 3.9L8.8 7.3" stroke-width=".95"/></svg></div><svg style="position:absolute;left:42.5px;top:5px" width="13" height="13" viewBox="0 0 13 13" fill="none" stroke="#fff" stroke-width="1.05"><circle cx="6.3" cy="6.3" r="5.6"/><path d="M4 4L8.6 8.6M8.6 4L4 8.6"/></svg><span style="left:59.5px">0</span><svg style="position:absolute;left:71px;top:5px" width="13" height="13" viewBox="0 0 13 13" fill="none" stroke="#fff" stroke-width="1.05"><path d="M6.2.8L11.8 11.8H.6Z M6.2 4.6V8.2M6.2 9.4V10.4"/></svg><span style="left:87.5px">0</span><svg style="position:absolute;left:1088.5px;top:4.5px" width="12" height="13" viewBox="0 0 12 13" fill="none" stroke="#fff" stroke-width="1.15"><path d="M3.4 .5L.6 3.4M3.6 4.2L.4 7.3M2.3 5.6V11.8M5.6 1.4H11.4M5 4.9H11.8M9.2 4.9V11Q9.2 11.9 7.8 11.7"/></svg><span style="left:1103.5px">1</span><svg style="position:absolute;left:1110.5px;top:9px" width="4.5" height="13" viewBox="0 0 4.5 13" fill="none" stroke="#fff" stroke-width="1.15"><path d="M.6 .6L3.4 3.8"/></svg><svg style="position:absolute;left:1121.2px;top:4.5px" width="12" height="13" viewBox="0 0 12 13" fill="none" stroke="#fff" stroke-width="1.15"><path d="M.5 1H7.2M3.2 1Q2.6 4.2.4 6.2M2.6 3.6H6.2Q5.6 8.5 1 11.6M3 6.6L4.6 8.1M8.7 2.4V8.6M11.2 .5V11Q11.2 12 9.8 11.6"/></svg><span style="left:1136.5px">1</span><svg style="position:absolute;left:1159.4px;top:4.5px" width="10" height="13" viewBox="0 0 10 13" fill="none" stroke="#fff" stroke-width="1.15"><path d="M4.2.5Q3.2 3 .6 5.4M3.6 2.1H9.6Q8.3 8.3 1.6 11.7M3.4 5.2L7.6 7.6"/></svg><svg style="position:absolute;left:1172.4px;top:4.5px" width="11" height="13" viewBox="0 0 11 13" fill="none" stroke="#fff" stroke-width="1.15"><path d="M.8 2.4H9.4Q8.6 8.4 2.6 11.7M8.6 0L9.3 1.4M10.3 0L11 1.4"/></svg><svg style="position:absolute;left:1182.9px;top:4.5px" width="10.5" height="13" viewBox="0 0 10.5 13" fill="none" stroke="#fff" stroke-width="1.15"><path d="M5.6 2.6Q4.3 9 2.4 10.4Q.6 11.2.7 8Q1.2 3 5.9 2.5Q10.3 2.3 9.9 6.8Q9.5 10.9 5.6 11.5"/></svg><svg style="position:absolute;left:1194.9px;top:4.5px" width="10.5" height="13" viewBox="0 0 10.5 13" fill="none" stroke="#fff" stroke-width="1.15"><path d="M.4 4H10.4M3.2 1V7.6M7.6 1V6.6Q7.6 10 3.8 12"/></svg><svg style="position:absolute;left:1207px;top:4.5px" width="9.5" height="13" viewBox="0 0 9.5 13" fill="none" stroke="#fff" stroke-width="1.15"><path d="M8.8.6Q6 4.8.4 7.6M6 4.4V12"/></svg><svg style="position:absolute;left:1218.7px;top:4.5px" width="12" height="13" viewBox="0 0 12 13" fill="none" stroke="#fff" stroke-width="1.15"><path d="M1.4 2H8.6Q6.8 8 .6 12M5.2 7.4L9.8 11.8M9.4 0L10.1 1.4M11 0L11.7 1.4"/></svg><span style="left:1230.5px">:</span><span style="left:1237px">4</span><span style="left:1263px">UTF-8</span><span style="left:1313.4px">CRLF</span><span style="left:1359.6px">Excel</span><svg style="position:absolute;left:1405.5px;top:4.5px" width="14" height="14" viewBox="0 0 14 14" fill="none" stroke="#fff" stroke-width="1"><circle cx="4.6" cy="6.3" r="2.6"/><path d="M.5 13.4C.9 10.6 2.6 9.4 4.6 9.4C6.6 9.4 8.3 10.6 8.7 13.4M6 1H13V6.6H10.6L8.6 8.4V6.6"/></svg><svg style="position:absolute;left:1436.8px;top:4.5px" width="11" height="13" viewBox="0 0 12 14" fill="none" stroke="#fff" stroke-width="1"><path d="M1.4 10.6V6Q1.4 1.6 5.8 1.4Q10.2 1.6 10.2 6V10.6L11.3 11.6H.4Z M4.3 12.6Q5.8 14.2 7.3 12.6"/></svg></div>
</div>
<div class="bord"></div>
</body></html>
